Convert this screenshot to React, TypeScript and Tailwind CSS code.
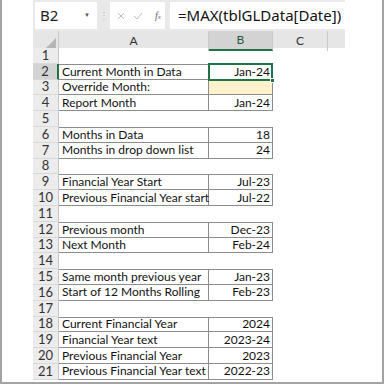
import React from "react";

type Row = { n: number; a?: string; b?: string; group?: "first" | "mid"; fill?: boolean };

const rows: Row[] = [
  { n: 1 },
  { n: 2, a: "Current Month in Data", b: "Jan-24", group: "first" },
  { n: 3, a: "Override Month:", b: "", group: "mid", fill: true },
  { n: 4, a: "Report Month", b: "Jan-24", group: "mid" },
  { n: 5 },
  { n: 6, a: "Months in Data", b: "18", group: "first" },
  { n: 7, a: "Months in drop down list", b: "24", group: "mid" },
  { n: 8 },
  { n: 9, a: "Financial Year Start", b: "Jul-23", group: "first" },
  { n: 10, a: "Previous Financial Year start", b: "Jul-22", group: "mid" },
  { n: 11 },
  { n: 12, a: "Previous month", b: "Dec-23", group: "first" },
  { n: 13, a: "Next Month", b: "Feb-24", group: "mid" },
  { n: 14 },
  { n: 15, a: "Same month previous year", b: "Jan-23", group: "first" },
  { n: 16, a: "Start of 12 Months Rolling", b: "Feb-23", group: "mid" },
  { n: 17 },
  { n: 18, a: "Current Financial Year", b: "2024", group: "first" },
  { n: 19, a: "Financial Year text", b: "2023-24", group: "mid", },
  { n: 20, a: "Previous Financial Year", b: "2023", group: "mid" },
  { n: 21, a: "Previous Financial Year text", b: "2022-23", group: "mid" },
];

const cellFont = { fontFamily: "Lato, 'Liberation Sans', sans-serif" };

export default function App() {
  return (
    <div className="w-[384px] h-[384px] overflow-hidden bg-white border-l-2 border-r-2 border-b-2 border-[#a3a3a3] pl-[31px]">
      <div className="w-[312px] flex flex-col">
        {/* formula bar */}
        <div className="h-[31px] bg-[#e9e9e9] flex items-center pl-[2px]" style={{ fontFamily: "'Noto Sans', 'Open Sans', sans-serif" }}>
          <div className="w-[62px] h-[27px] bg-white flex items-center justify-between pl-[5px] pr-[7px]">
            <span className="text-[15px] text-[#222] leading-none">B2</span>
            <span className="text-[6px] text-[#555]">▼</span>
          </div>
          <div className="w-[13px] flex justify-center text-[10px] text-[#b8b8b8]">⋮</div>
          <div className="w-[55px] h-[27px] bg-white flex items-center pl-[7px]">
            <svg width="8" height="8" viewBox="0 0 8 8"><path d="M1 1L7 7M7 1L1 7" stroke="#b8b8b8" strokeWidth="1" /></svg>
            <svg className="ml-[8px]" width="10" height="8" viewBox="0 0 10 8"><path d="M1 4L4 7L9 1" stroke="#b8b8b8" strokeWidth="1" fill="none" /></svg>
            <span className="ml-[12px] text-[10px] italic text-[#666] leading-none" style={{ fontFamily: "'Liberation Serif', serif" }}>f<span className="text-[7px]">x</span></span>
          </div>
          <div className="ml-[5px] flex-1 h-[27px] bg-white flex items-center pl-[8px]">
            <span className="text-[15px] text-[#111] leading-none">=MAX(tblGLData[Date])</span>
          </div>
        </div>
        {/* column headers */}
        <div className="grid grid-cols-[26px_150px_64px_55px_17px] h-[17px] bg-[#e6e6e6] text-[12px] text-[#333]" style={cellFont}>
          <div className="relative border-r border-[#c9c9c9]">
            <svg className="absolute right-[2px] bottom-[2px]" width="11" height="11" viewBox="0 0 11 11"><path d="M11 0L11 11L0 11Z" fill="#b5b5b5" /></svg>
          </div>
          <div className="border-r border-[#c9c9c9] flex items-center justify-center">A</div>
          <div className="bg-[#d3d3d3] border-r border-[#c9c9c9] border-b-2 border-b-[#217346] flex items-center justify-center text-[#1d5c3a]">B</div>
          <div className="border-r border-[#c9c9c9] flex items-center justify-center">C</div>
          <div></div>
        </div>
        {/* rows */}
        <div className="relative" style={cellFont}>
          {rows.map((r) => {
            const sel = r.n === 2;
            const g = r.group;
            return (
              <div key={r.n} className="grid grid-cols-[26px_150px_64px_55px_17px] h-[15.8px] text-[12px] text-[#111] leading-none">
                <div className={`flex items-center justify-center border-b border-[#d9d9d9] text-[13px] text-[#333] ${sel ? "bg-[#d3d3d3] border-r-2 border-r-[#217346] text-[#1d5c3a]" : "bg-[#ececec] border-r border-r-[#c6c6c6]"}`}>{r.n}</div>
                {g ? (
                  <div className={`flex items-center pl-[3px] border-r border-b border-[#8c8c8c] ${g === "first" ? "border-t" : ""} whitespace-nowrap overflow-visible`}>{r.a}</div>
                ) : (
                  <div></div>
                )}
                {g ? (
                  <div className={`flex items-center justify-end pr-[2px] border-r border-b border-[#8c8c8c] ${g === "first" ? "border-t" : ""} ${r.fill ? "bg-[#fff2cc]" : ""}`}>{r.b}</div>
                ) : (
                  <div></div>
                )}
                <div></div>
                <div></div>
              </div>
            );
          })}
          {/* selection */}
          <div className="absolute left-[175px] top-[15px] w-[65px] h-[17.6px] border-2 border-[#217346] pointer-events-none">
            <div className="absolute right-[-4px] bottom-[-4px] w-[5px] h-[5px] bg-[#217346] border border-white"></div>
          </div>
        </div>
      </div>
    </div>
  );
}
